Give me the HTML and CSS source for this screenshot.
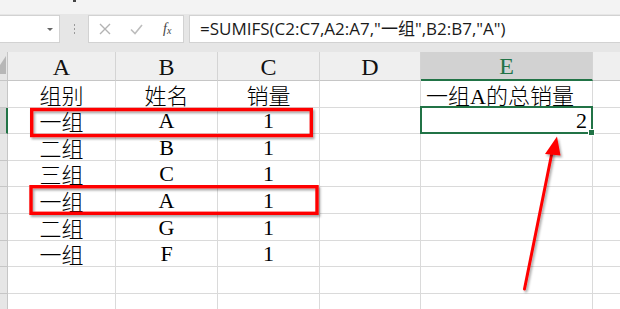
FILE: index.html
```html
<!DOCTYPE html>
<html lang="zh-CN">
<head>
<meta charset="utf-8">
<title>SUMIFS</title>
<link rel="stylesheet" href="styles.css">
</head>
<body>
<div class="app">
  <div class="ribbon"><span class="ribbon-mark"></span></div>
  <div class="fbar">
    <div class="namebox"><span class="dd"></span></div>
    <div class="grip"><i></i><i></i><i></i></div>
    <div class="btnbox">
      <svg class="ico" width="12" height="12" viewBox="0 0 12 12"><path d="M1 1 L11 11 M11 1 L1 11" stroke="#b3b3b3" stroke-width="1.4" fill="none"/></svg>
      <svg class="ico" width="13" height="11" viewBox="0 0 13 11"><path d="M1 5.5 L5 9.5 L12 1" stroke="#bdbdbd" stroke-width="1.6" fill="none"/></svg>
      <span class="fx">f<sub>x</sub></span>
    </div>
    <div class="formula">=SUMIFS(C2:C7,A2:A7,"一组",B2:B7,"A")</div>
  </div>
  <div class="sheet">
    <div class="corner"><span class="tri"></span></div>
    <div class="ch">A</div>
    <div class="ch">B</div>
    <div class="ch">C</div>
    <div class="ch">D</div>
    <div class="ch sel">E</div>
    <div class="ch last"></div>

    <div class="rh"></div>
    <div class="c cz">组别</div><div class="c cz">姓名</div><div class="c cz">销量</div><div class="c"></div><div class="c lz">一组A的总销量</div><div class="c last"></div>

    <div class="rh sel"></div>
    <div class="c cz">一组</div><div class="c cl">A</div><div class="c cl">1</div><div class="c"></div><div class="c rl active">2<span class="handle"></span></div><div class="c last"></div>

    <div class="rh"></div>
    <div class="c cz">二组</div><div class="c cl">B</div><div class="c cl">1</div><div class="c"></div><div class="c"></div><div class="c last"></div>

    <div class="rh"></div>
    <div class="c cz">三组</div><div class="c cl">C</div><div class="c cl">1</div><div class="c"></div><div class="c"></div><div class="c last"></div>

    <div class="rh"></div>
    <div class="c cz">一组</div><div class="c cl">A</div><div class="c cl">1</div><div class="c"></div><div class="c"></div><div class="c last"></div>

    <div class="rh"></div>
    <div class="c cz">二组</div><div class="c cl">G</div><div class="c cl">1</div><div class="c"></div><div class="c"></div><div class="c last"></div>

    <div class="rh"></div>
    <div class="c cz">一组</div><div class="c cl">F</div><div class="c cl">1</div><div class="c"></div><div class="c"></div><div class="c last"></div>

    <div class="rh"></div>
    <div class="c"></div><div class="c"></div><div class="c"></div><div class="c"></div><div class="c"></div><div class="c last"></div>

    <div class="rh"></div>
    <div class="c"></div><div class="c"></div><div class="c"></div><div class="c"></div><div class="c"></div><div class="c last"></div>
  </div>

  <svg class="marks" width="620" height="309" viewBox="0 0 620 309">
    <defs>
      <filter id="sh" x="-10%" y="-10%" width="130%" height="140%">
        <feDropShadow dx="1.5" dy="2" stdDeviation="1.2" flood-color="#000" flood-opacity="0.35"/>
      </filter>
    </defs>
    <g filter="url(#sh)" fill="none" stroke="#ff0000" stroke-width="3.4">
      <rect x="31.7" y="109.5" width="279.6" height="26"/>
      <rect x="31" y="186.7" width="286" height="26.6"/>
      <line x1="524.5" y1="289" x2="552.5" y2="150" stroke-width="3" stroke-linecap="round"/>
    </g>
    <polygon filter="url(#sh)" points="557,136.5 545,154 560.5,155.5" fill="#ff0000"/>
  </svg>
</div>
</body>
</html>
```
FILE: styles.css
```css
html, body {
  margin: 0;
  padding: 0;
  background: #ffffff;
}
.app {
  position: relative;
  width: 620px;
  height: 309px;
  overflow: hidden;
  font-family: "Liberation Serif", "Noto Sans CJK SC", serif;
}
.ribbon {
  height: 14px;
  background: #f3f3f3;
  position: relative;
}
.ribbon-mark {
  position: absolute;
  left: 73px;
  top: 0;
  width: 3px;
  height: 2px;
  background: #444;
}
.fbar {
  height: 38px;
  background: #e6e6e6;
  display: flex;
  align-items: flex-start;
  padding-top: 1px;
  box-sizing: border-box;
}
.namebox {
  width: 60px;
  height: 28px;
  background: #fff;
  border: 1px solid #d2d2d2;
  border-left: none;
  box-sizing: border-box;
  position: relative;
  display: flex;
  justify-content: flex-end;
  align-items: center;
  padding-right: 6px;
}
.dd {
  width: 0;
  height: 0;
  border-left: 3px solid transparent;
  border-right: 3px solid transparent;
  border-top: 3px solid #666;
}
.grip {
  width: 28px;
  height: 28px;
  display: flex;
  flex-direction: column;
  align-items: center;
  justify-content: center;
  gap: 2px;
}
.grip i {
  width: 1px;
  height: 2px;
  background: #9a9a9a;
  display: block;
}
.btnbox {
  width: 96px;
  height: 28px;
  background: #fff;
  border: 1px solid #d2d2d2;
  box-sizing: border-box;
  display: flex;
  align-items: center;
  padding-left: 10px;
  gap: 0;
}
.btnbox .ico:first-child { margin-right: 19px; }
.btnbox .ico:nth-child(2) { margin-right: 20px; }
.fx {
  font-family: "Liberation Serif", serif;
  font-style: italic;
  font-size: 14px;
  color: #444;
  line-height: 1;
}
.fx sub {
  font-size: 10px;
  vertical-align: -1px;
}
.formula {
  flex: 1;
  margin-left: 5px;
  height: 28px;
  background: #fff;
  border: 1px solid #d2d2d2;
  border-right: none;
  box-sizing: border-box;
  font-family: "Open Sans", "Noto Sans CJK SC", sans-serif;
  font-size: 17px;
  color: #1a1a1a;
  line-height: 26px;
  padding-left: 10px;
  white-space: nowrap;
}
.sheet {
  display: grid;
  grid-template-columns: 8px 108px 102px 102px 101px 172px 1fr;
  grid-template-rows: 29px repeat(9, 26.6px);
}
.corner {
  background: #e6e6e6;
  border-right: 1px solid #c6c6c6;
  border-bottom: 1px solid #c6c6c6;
  position: relative;
  box-sizing: border-box;
  overflow: hidden;
}
.tri {
  position: absolute;
  right: 1px;
  bottom: 6px;
  width: 12px;
  height: 18px;
  background: #b7b7b7;
  clip-path: polygon(100% 0, 100% 100%, 0 100%);
}
.ch {
  background: #efefef;
  border-right: 1px solid #d4d4d4;
  border-bottom: 1px solid #c6c6c6;
  box-sizing: border-box;
  font-family: "Liberation Serif", serif;
  font-size: 24px;
  color: #111;
  display: flex;
  align-items: center;
  justify-content: center;
  padding-top: 2px;
}
.ch.sel {
  background: #d2d2d2;
  color: #217346;
  border-bottom: 2px solid #217346;
}
.ch.last { border-right: none; }
.rh {
  background: #e6e6e6;
  border-right: 1px solid #c6c6c6;
  border-bottom: 1px solid #c6c6c6;
  box-sizing: border-box;
}
.rh.sel {
  background: #d2d2d2;
  border-right: 2px solid #217346;
}
.c {
  border-right: 1px solid #dadada;
  border-bottom: 1px solid #dadada;
  box-sizing: border-box;
  display: flex;
  align-items: flex-end;
  color: #000;
  white-space: nowrap;
  position: relative;
}
.c.last { border-right: none; }
.cz, .lz {
  font-family: "Liberation Serif", "Noto Sans CJK SC", serif;
  font-weight: 300;
  font-size: 22px;
  line-height: 20px;
}
.cz { justify-content: center; }
.lz { justify-content: flex-start; padding-left: 5px; }
.cl, .rl {
  font-family: "Liberation Serif", serif;
  font-size: 22px;
  line-height: 24px;
}
.cl { justify-content: center; }
.rl { justify-content: flex-end; padding-right: 5px; }
.active::after {
  content: "";
  position: absolute;
  left: -1px;
  top: -2px;
  right: -1px;
  bottom: -1px;
  border: 2px solid #217346;
}
.handle {
  position: absolute;
  right: -3px;
  bottom: -3px;
  width: 5px;
  height: 5px;
  background: #217346;
  border: 1px solid #fff;
  z-index: 2;
}
.marks {
  position: absolute;
  left: 0;
  top: 0;
  pointer-events: none;
}
```
